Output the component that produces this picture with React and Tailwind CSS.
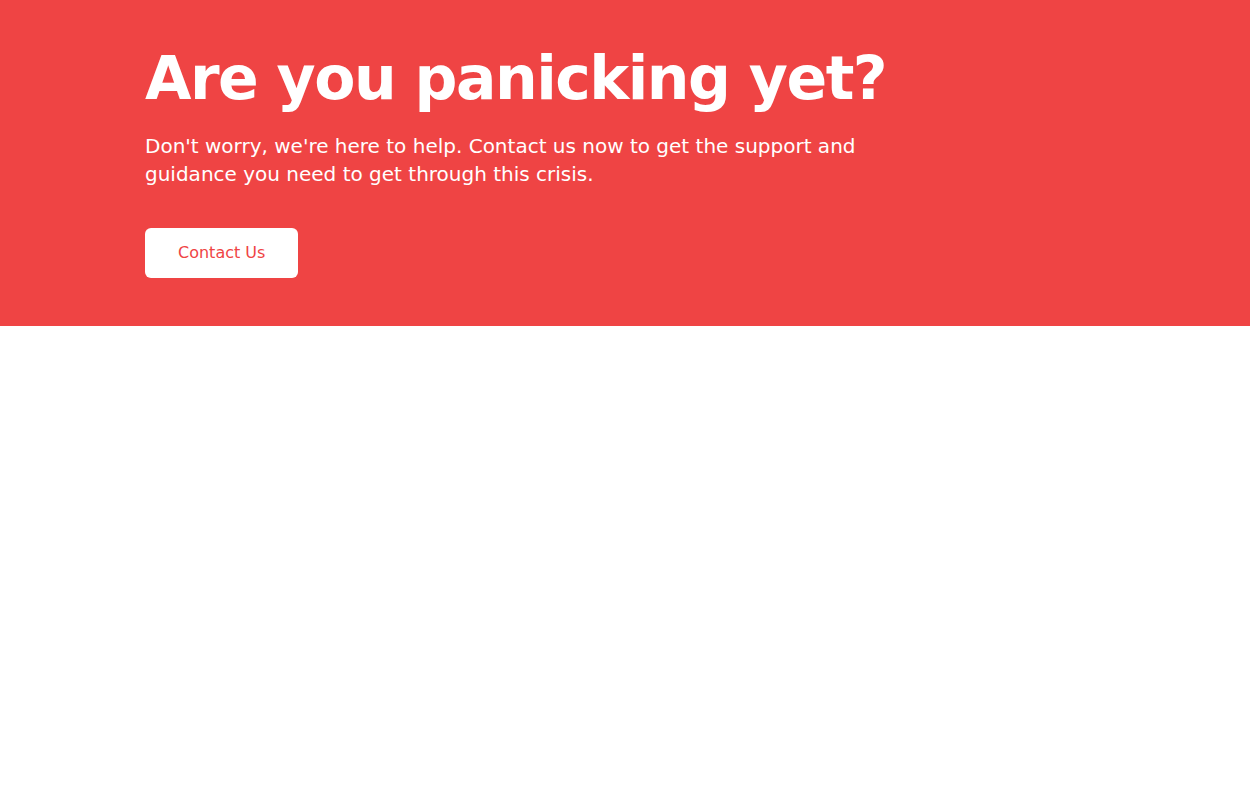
export default function App() {
  return (
    <div className="min-h-screen bg-white" style={{ fontFamily: '"DejaVu Sans", sans-serif' }}>
      <section className="bg-[#ef4444] py-12">
        <div className="max-w-[960px] mx-auto">
          <h1 className="text-[60px] leading-[60px] font-bold tracking-tight text-white">Are you panicking yet?</h1>
          <p className="mt-6 text-[20px] leading-[28px] text-white max-w-3xl">
            Don't worry, we're here to help. Contact us now to get the support and guidance you need to get through this crisis.
          </p>
          <button className="mt-10 bg-white text-[#ef4444] text-base leading-[26px] px-[33px] py-3 rounded-md">
            Contact Us
          </button>
        </div>
      </section>
    </div>
  );
}
